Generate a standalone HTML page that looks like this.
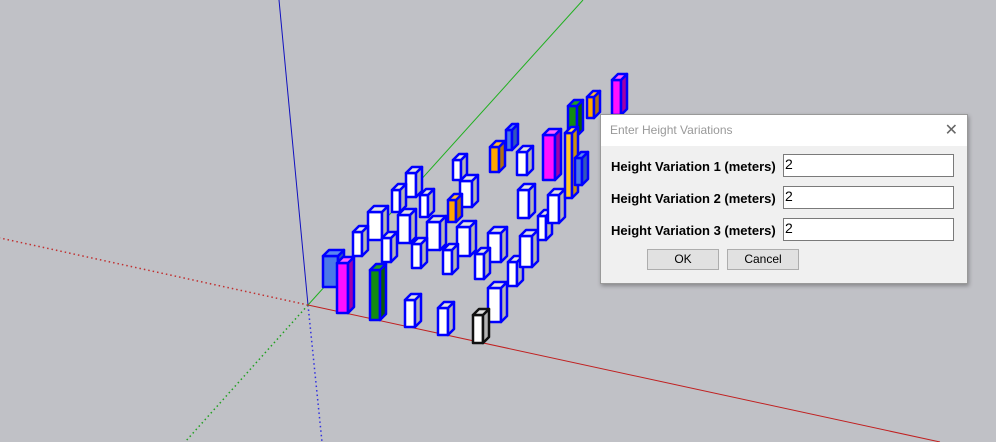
<!DOCTYPE html>
<html><head><meta charset="utf-8"><style>
body{margin:0;width:996px;height:442px;overflow:hidden;background:#c0c1c6;position:relative;font-family:"Liberation Sans",Arial,sans-serif}
svg{position:absolute;left:0;top:0}
.dlg{position:absolute;left:600px;top:114px;width:366px;height:168px;background:#f0f0f0;border:1px solid #999;box-shadow:1px 2px 4px rgba(0,0,0,.3)}
.tb{height:31px;background:#fff;font-size:12px;color:#999;line-height:31px;padding-left:9px;position:relative}
.x{position:absolute;right:9px;top:0;font-size:16px;color:#666}
.lab{position:absolute;left:10px;font-size:13px;font-weight:bold;color:#000;letter-spacing:0}
.in{position:absolute;left:182px;width:168px;height:21px;background:#fff;border:1px solid #7a7a7a;font-size:14px;line-height:18px;padding-left:1px}
.btn{position:absolute;top:134px;width:70px;height:19px;background:#e1e1e1;border:1px solid #adadad;font-size:12px;text-align:center;line-height:19px}
</style></head><body>
<svg width="996" height="442" viewBox="0 0 996 442">
<line x1="279" y1="0" x2="308" y2="305" stroke="#1010c0" stroke-width="1"/>
<line x1="308" y1="305" x2="322" y2="442" stroke="#3030e0" stroke-width="1.5" stroke-dasharray="1.5 3"/>
<line x1="308" y1="305" x2="583" y2="0" stroke="#20b020" stroke-width="1"/>
<line x1="308" y1="305" x2="185" y2="442" stroke="#20a020" stroke-width="1.5" stroke-dasharray="1.5 3"/>
<line x1="308" y1="305" x2="940" y2="442" stroke="#c02020" stroke-width="1"/>
<line x1="308" y1="305" x2="0" y2="238" stroke="#c03030" stroke-width="1.5" stroke-dasharray="1.5 3"/>
<g id="boxes" stroke-width="2.5" stroke-linejoin="round"></g>
</svg>
<div class="dlg">
<div class="tb">Enter Height Variations<span class="x">✕</span></div>
<div class="lab" style="top:44px">Height Variation 1 (meters)</div><div class="in" style="top:39px">2</div>
<div class="lab" style="top:76px">Height Variation 2 (meters)</div><div class="in" style="top:71px">2</div>
<div class="lab" style="top:108px">Height Variation 3 (meters)</div><div class="in" style="top:103px">2</div>
<div class="btn" style="left:46px">OK</div><div class="btn" style="left:126px">Cancel</div>
</div>
<script>
var B=[
[406,173,10,24,'w'],[453,160,8,20,'w'],[392,190,8,22,'w'],[420,195,8,22,'w'],[460,181,12,26,'w'],
[368,212,14,28,'w'],[398,215,12,28,'w'],[353,232,9,24,'w'],[382,238,9,24,'w'],[427,222,13,28,'w'],
[457,227,13,29,'w'],[412,244,9,24,'w'],[443,250,9,24,'w'],[488,233,13,29,'w'],[475,254,9,25,'w'],
[508,262,9,24,'w'],[520,236,12,31,'w'],[538,216,8,24,'w'],[548,195,11,28,'w'],[518,190,11,28,'w'],
[517,152,10,23,'w'],[488,288,13,34,'w'],[405,300,10,27,'w'],[438,308,10,27,'w'],[473,315,10,28,'k'],
[323,256,15,31,'b'],[337,263,11,50,'m'],[370,270,10,50,'g'],[448,200,8,22,'o'],
[490,147,9,25,'o'],[506,130,6,20,'b'],[543,135,12,45,'m'],[568,106,9,30,'g'],[565,133,7,65,'y'],
[575,158,7,27,'b'],[587,97,7,21,'o'],[612,80,9,35,'m']];
var C={w:['#fff','#b4b4b4','#e2e2e2','#0000ff'],k:['#fff','#b4b4b4','#e2e2e2','#111'],
b:['#4a78e8','#3258b8','#5a88f0','#0000ff'],m:['#ff10ff','#a000a8','#ff60ff','#0000ff'],
g:['#128c12','#0a5a0a','#20a020','#0000ff'],o:['#ffa500','#b07010','#ffb830','#0000ff'],
y:['#ffc828','#c89010','#ffd850','#0000ff']};
var g=document.getElementById('boxes'),h='';
B.forEach(function(b){var x=b[0],y=b[1],w=b[2],H=b[3],c=C[b[4]],dx=6,dy=-6;
h+='<polygon points="'+x+','+y+' '+(x+w)+','+y+' '+(x+w)+','+(y+H)+' '+x+','+(y+H)+'" fill="'+c[0]+'" stroke="'+c[3]+'"/>';
h+='<polygon points="'+(x+w)+','+y+' '+(x+w+dx)+','+(y+dy)+' '+(x+w+dx)+','+(y+H+dy)+' '+(x+w)+','+(y+H)+'" fill="'+c[1]+'" stroke="'+c[3]+'"/>';
h+='<polygon points="'+x+','+y+' '+(x+dx)+','+(y+dy)+' '+(x+w+dx)+','+(y+dy)+' '+(x+w)+','+y+'" fill="'+c[2]+'" stroke="'+c[3]+'"/>';});
g.innerHTML=h;
</script>
</body></html>
